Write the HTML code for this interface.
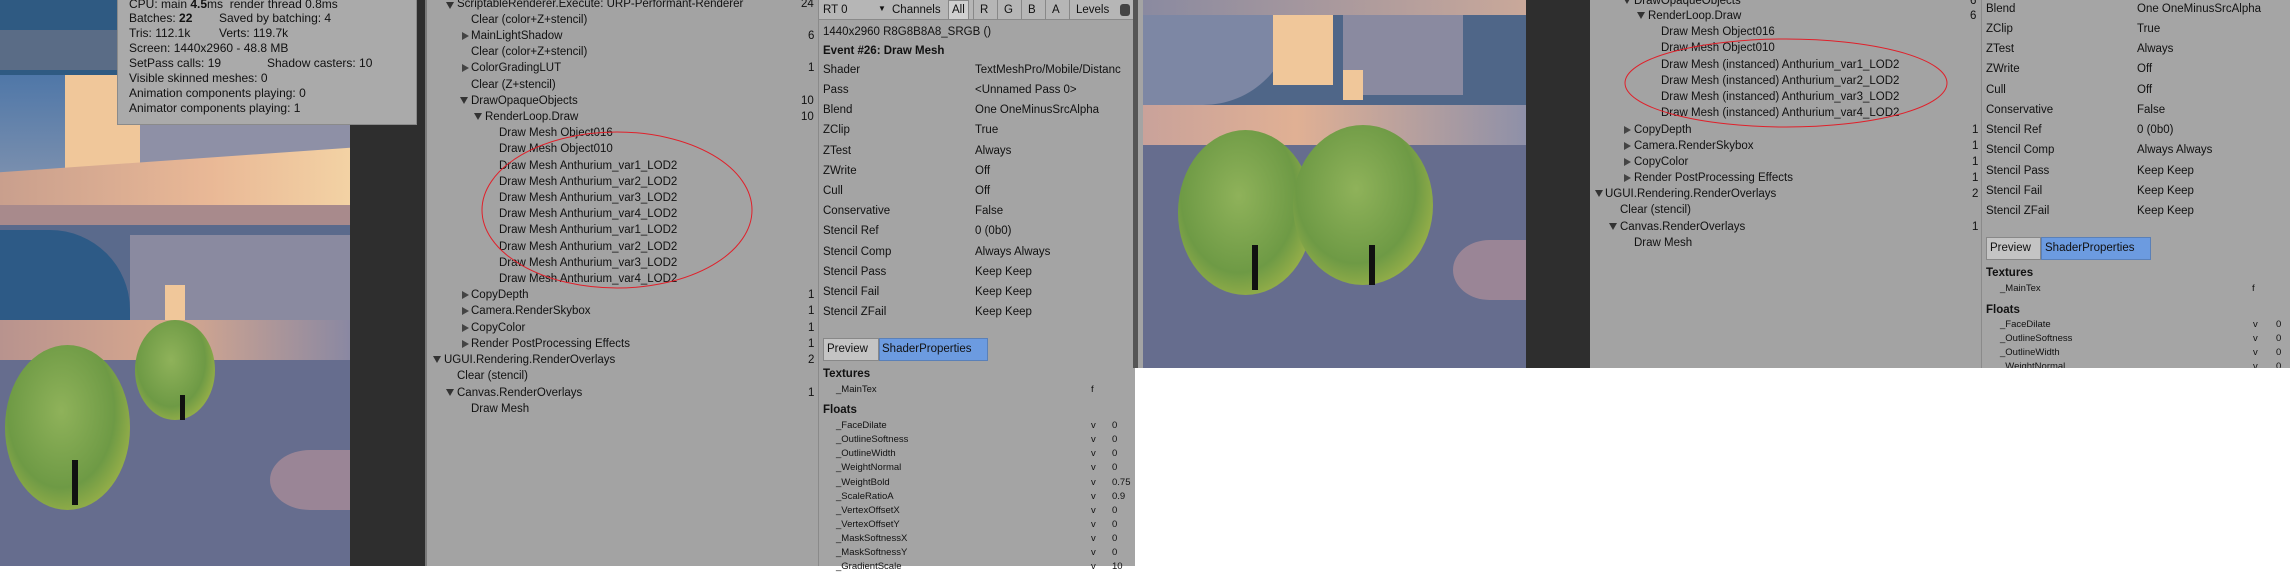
<!DOCTYPE html>
<html><head><meta charset="utf-8"><style>
*{margin:0;padding:0;box-sizing:border-box}
body{width:2290px;height:574px;background:#fff;position:relative;overflow:hidden;font-family:"Liberation Sans",sans-serif;color:#111}
.a{position:absolute}
.t{position:absolute;font-size:11.5px;white-space:nowrap;line-height:14px}
.s{position:absolute;font-size:9.5px;white-space:nowrap;line-height:12px}
.tri{position:absolute;width:0;height:0;border-left:4px solid transparent;border-right:4px solid transparent;border-top:7px solid #333}
.trr{position:absolute;width:0;height:0;border-top:4px solid transparent;border-bottom:4px solid transparent;border-left:7px solid #444}
.b{font-weight:bold}
.plant{position:absolute;border-radius:50%;background:radial-gradient(ellipse at 45% 40%,#8fb25a,#6e9a45 55%,#a8b84a 85%,rgba(150,170,60,0) 100%)}
</style></head><body>

<!-- LEFT COMPOSITE -->
<div class="a" style="left:0;top:0;width:1135px;height:566px;background:#a4a4a4"></div>
<!-- game view left -->
<div class="a" style="left:0;top:0;width:350px;height:566px;overflow:hidden;background:#626a8c">
  <div class="a" style="left:0;top:0;width:350px;height:75px;background:#2f5a82"></div>
  <div class="a" style="left:0;top:30px;width:120px;height:40px;background:#5a6c86"></div>
  <div class="a" style="left:0;top:75px;width:90px;height:100px;background:linear-gradient(#4f77a8,#7a8fae)"></div>
  <div class="a" style="left:65px;top:75px;width:285px;height:100px;background:#f0c79a"></div>
  <div class="a" style="left:140px;top:125px;width:210px;height:50px;background:#8e90a6"></div>
  <div class="a" style="left:0;top:160px;width:350px;height:60px;background:linear-gradient(90deg,#c99f8d,#e9b896 60%,#f3d2a4);transform:skewY(-4deg)"></div>
  <div class="a" style="left:0;top:205px;width:350px;height:20px;background:#a88a8c"></div>
  <div class="a" style="left:0;top:225px;width:350px;height:100px;background:#5a6a8c"></div>
  <div class="a" style="left:0;top:230px;width:130px;height:90px;background:#2d5a86;border-radius:0 80px 0 0"></div>
  <div class="a" style="left:130px;top:235px;width:220px;height:85px;background:#8a8aa0"></div>
  <div class="a" style="left:165px;top:285px;width:20px;height:40px;background:#f0c79a"></div>
  <div class="a" style="left:0;top:320px;width:350px;height:40px;background:linear-gradient(90deg,#b8938e,#d8a88e 50%,#8a88a2)"></div>
  <div class="a" style="left:0;top:360px;width:350px;height:206px;background:#666d8e"></div>
  <div class="a" style="left:270px;top:450px;width:80px;height:60px;background:#9a8596;border-radius:50% 0 0 50%"></div>
  <div class="plant" style="left:5px;top:345px;width:125px;height:165px"></div>
  <div class="plant" style="left:135px;top:320px;width:80px;height:100px"></div>
  <div class="a" style="left:72px;top:460px;width:6px;height:45px;background:#111"></div>
  <div class="a" style="left:180px;top:395px;width:5px;height:25px;background:#111"></div>
</div>
<!-- dark strip -->
<div class="a" style="left:350px;top:0;width:76px;height:566px;background:#2e2e2e"></div>
<div class="a" style="left:425px;top:0;width:2px;height:566px;background:#7a7a7a"></div>
<!-- stats box -->
<div class="a" style="left:117px;top:0;width:300px;height:125px;background:#aaa;border:1px solid #8a8a8a;border-top:none"></div>
<div class="t" style="left:129px;top:-3px;font-size:12px">CPU: main <b>4.5</b>ms&nbsp; render thread 0.8ms</div>
<div class="t" style="left:129px;top:11px;font-size:12px">Batches: <b>22</b></div><div class="t" style="left:219px;top:11px;font-size:12px">Saved by batching: 4</div>
<div class="t" style="left:129px;top:26px;font-size:12px">Tris: 112.1k</div><div class="t" style="left:219px;top:26px;font-size:12px">Verts: 119.7k</div>
<div class="t" style="left:129px;top:41px;font-size:12px">Screen: 1440x2960 - 48.8 MB</div>
<div class="t" style="left:129px;top:56px;font-size:12px">SetPass calls: 19</div><div class="t" style="left:267px;top:56px;font-size:12px">Shadow casters: 10</div>
<div class="t" style="left:129px;top:71px;font-size:12px">Visible skinned meshes: 0</div>
<div class="t" style="left:129px;top:86px;font-size:12px">Animation components playing: 0</div>
<div class="t" style="left:129px;top:101px;font-size:12px">Animator components playing: 1</div>
<!-- hierarchy left -->
<div class="a" style="left:427px;top:0;width:391px;height:566px;background:#a3a3a3"></div>
<div class="tri" style="left:446px;top:2px"></div><div class="t" style="left:457px;top:-3px">ScriptableRenderer.Execute: URP-Performant-Renderer</div><div class="t" style="left:801px;top:-3px">24</div>
<div class="t" style="left:471px;top:13px">Clear (color+Z+stencil)</div>
<div class="trr" style="left:462px;top:32px"></div><div class="t" style="left:471px;top:29px">MainLightShadow</div><div class="t" style="left:808px;top:29px">6</div>
<div class="t" style="left:471px;top:45px">Clear (color+Z+stencil)</div>
<div class="trr" style="left:462px;top:64px"></div><div class="t" style="left:471px;top:61px">ColorGradingLUT</div><div class="t" style="left:808px;top:61px">1</div>
<div class="t" style="left:471px;top:78px">Clear (Z+stencil)</div>
<div class="tri" style="left:460px;top:97px"></div><div class="t" style="left:471px;top:94px">DrawOpaqueObjects</div><div class="t" style="left:801px;top:94px">10</div>
<div class="tri" style="left:474px;top:113px"></div><div class="t" style="left:485px;top:110px">RenderLoop.Draw</div><div class="t" style="left:801px;top:110px">10</div>
<div class="t" style="left:499px;top:126px">Draw Mesh Object016</div>
<div class="t" style="left:499px;top:142px">Draw Mesh Object010</div>
<div class="t" style="left:499px;top:159px">Draw Mesh Anthurium_var1_LOD2</div>
<div class="t" style="left:499px;top:175px">Draw Mesh Anthurium_var2_LOD2</div>
<div class="t" style="left:499px;top:191px">Draw Mesh Anthurium_var3_LOD2</div>
<div class="t" style="left:499px;top:207px">Draw Mesh Anthurium_var4_LOD2</div>
<div class="t" style="left:499px;top:223px">Draw Mesh Anthurium_var1_LOD2</div>
<div class="t" style="left:499px;top:240px">Draw Mesh Anthurium_var2_LOD2</div>
<div class="t" style="left:499px;top:256px">Draw Mesh Anthurium_var3_LOD2</div>
<div class="t" style="left:499px;top:272px">Draw Mesh Anthurium_var4_LOD2</div>
<div class="trr" style="left:462px;top:291px"></div><div class="t" style="left:471px;top:288px">CopyDepth</div><div class="t" style="left:808px;top:288px">1</div>
<div class="trr" style="left:462px;top:307px"></div><div class="t" style="left:471px;top:304px">Camera.RenderSkybox</div><div class="t" style="left:808px;top:304px">1</div>
<div class="trr" style="left:462px;top:324px"></div><div class="t" style="left:471px;top:321px">CopyColor</div><div class="t" style="left:808px;top:321px">1</div>
<div class="trr" style="left:462px;top:340px"></div><div class="t" style="left:471px;top:337px">Render PostProcessing Effects</div><div class="t" style="left:808px;top:337px">1</div>
<div class="tri" style="left:433px;top:356px"></div><div class="t" style="left:444px;top:353px">UGUI.Rendering.RenderOverlays</div><div class="t" style="left:808px;top:353px">2</div>
<div class="t" style="left:457px;top:369px">Clear (stencil)</div>
<div class="tri" style="left:446px;top:389px"></div><div class="t" style="left:457px;top:386px">Canvas.RenderOverlays</div><div class="t" style="left:808px;top:386px">1</div>
<div class="t" style="left:471px;top:402px">Draw Mesh</div>
<svg class="a" style="left:480px;top:128px" width="280" height="170"><ellipse cx="137" cy="82" rx="135" ry="78" fill="none" stroke="#e0202a" stroke-width="1"/></svg>
<!-- right panel left -->
<div class="a" style="left:818px;top:0;width:1px;height:566px;background:#8a8a8a"></div>
<div class="a" style="left:819px;top:0;width:316px;height:20px;background:#b6b6b6;border-bottom:1px solid #8a8a8a"></div>
<div class="t" style="left:823px;top:3px">RT 0</div><div class="t" style="left:878px;top:2px;font-size:8px">▼</div>
<div class="t" style="left:892px;top:3px">Channels</div>
<div class="a" style="left:948px;top:0;width:21px;height:20px;background:#d0d0d0;border:1px solid #888"></div><div class="t" style="left:952px;top:3px">All</div>
<div class="t" style="left:980px;top:3px">R</div><div class="t" style="left:1004px;top:3px">G</div><div class="t" style="left:1028px;top:3px">B</div><div class="t" style="left:1052px;top:3px">A</div>
<div class="a" style="left:973px;top:0;width:1px;height:20px;background:#888"></div><div class="a" style="left:997px;top:0;width:1px;height:20px;background:#888"></div><div class="a" style="left:1021px;top:0;width:1px;height:20px;background:#888"></div><div class="a" style="left:1045px;top:0;width:1px;height:20px;background:#888"></div><div class="a" style="left:1069px;top:0;width:1px;height:20px;background:#888"></div>
<div class="t" style="left:1076px;top:3px">Levels</div><div class="a" style="left:1120px;top:4px;width:10px;height:12px;background:#444;border-radius:3px"></div>
<div class="a" style="left:1133px;top:0;width:2px;height:368px;background:#555"></div>
<div class="t" style="left:823px;top:25px">1440x2960 R8G8B8A8_SRGB ()</div>
<div class="t b" style="left:823px;top:44px">Event #26: Draw Mesh</div>
<div class="t" style="left:823px;top:63px">Shader</div><div class="t" style="left:975px;top:63px">TextMeshPro/Mobile/Distanc</div>
<div class="t" style="left:823px;top:83px">Pass</div><div class="t" style="left:975px;top:83px">&lt;Unnamed Pass 0&gt;</div>
<div class="t" style="left:823px;top:103px">Blend</div><div class="t" style="left:975px;top:103px">One OneMinusSrcAlpha</div>
<div class="t" style="left:823px;top:123px">ZClip</div><div class="t" style="left:975px;top:123px">True</div>
<div class="t" style="left:823px;top:144px">ZTest</div><div class="t" style="left:975px;top:144px">Always</div>
<div class="t" style="left:823px;top:164px">ZWrite</div><div class="t" style="left:975px;top:164px">Off</div>
<div class="t" style="left:823px;top:184px">Cull</div><div class="t" style="left:975px;top:184px">Off</div>
<div class="t" style="left:823px;top:204px">Conservative</div><div class="t" style="left:975px;top:204px">False</div>
<div class="t" style="left:823px;top:224px">Stencil Ref</div><div class="t" style="left:975px;top:224px">0 (0b0)</div>
<div class="t" style="left:823px;top:245px">Stencil Comp</div><div class="t" style="left:975px;top:245px">Always Always</div>
<div class="t" style="left:823px;top:265px">Stencil Pass</div><div class="t" style="left:975px;top:265px">Keep Keep</div>
<div class="t" style="left:823px;top:285px">Stencil Fail</div><div class="t" style="left:975px;top:285px">Keep Keep</div>
<div class="t" style="left:823px;top:305px">Stencil ZFail</div><div class="t" style="left:975px;top:305px">Keep Keep</div>
<div class="a" style="left:823px;top:338px;width:56px;height:23px;background:#c4c4c4;border:1px solid #888"></div><div class="t" style="left:827px;top:342px">Preview</div>
<div class="a" style="left:879px;top:338px;width:109px;height:23px;background:#6c9be0;border:1px solid #5a80b8"></div><div class="t" style="left:882px;top:342px">ShaderProperties</div>
<div class="t b" style="left:823px;top:367px">Textures</div>
<div class="s" style="left:836px;top:384px">_MainTex</div><div class="s" style="left:1091px;top:384px">f</div>
<div class="t b" style="left:823px;top:403px">Floats</div>
<div class="s" style="left:836px;top:420px">_FaceDilate</div><div class="s" style="left:1091px;top:420px">v</div><div class="s" style="left:1112px;top:420px">0</div>
<div class="s" style="left:836px;top:434px">_OutlineSoftness</div><div class="s" style="left:1091px;top:434px">v</div><div class="s" style="left:1112px;top:434px">0</div>
<div class="s" style="left:836px;top:448px">_OutlineWidth</div><div class="s" style="left:1091px;top:448px">v</div><div class="s" style="left:1112px;top:448px">0</div>
<div class="s" style="left:836px;top:462px">_WeightNormal</div><div class="s" style="left:1091px;top:462px">v</div><div class="s" style="left:1112px;top:462px">0</div>
<div class="s" style="left:836px;top:477px">_WeightBold</div><div class="s" style="left:1091px;top:477px">v</div><div class="s" style="left:1112px;top:477px">0.75</div>
<div class="s" style="left:836px;top:491px">_ScaleRatioA</div><div class="s" style="left:1091px;top:491px">v</div><div class="s" style="left:1112px;top:491px">0.9</div>
<div class="s" style="left:836px;top:505px">_VertexOffsetX</div><div class="s" style="left:1091px;top:505px">v</div><div class="s" style="left:1112px;top:505px">0</div>
<div class="s" style="left:836px;top:519px">_VertexOffsetY</div><div class="s" style="left:1091px;top:519px">v</div><div class="s" style="left:1112px;top:519px">0</div>
<div class="s" style="left:836px;top:533px">_MaskSoftnessX</div><div class="s" style="left:1091px;top:533px">v</div><div class="s" style="left:1112px;top:533px">0</div>
<div class="s" style="left:836px;top:547px">_MaskSoftnessY</div><div class="s" style="left:1091px;top:547px">v</div><div class="s" style="left:1112px;top:547px">0</div>
<div class="s" style="left:836px;top:561px">_GradientScale</div><div class="s" style="left:1091px;top:561px">v</div><div class="s" style="left:1112px;top:561px">10</div>

<!-- RIGHT COMPOSITE -->
<div class="a" style="left:1135px;top:0;width:1155px;height:368px;background:#a4a4a4;overflow:hidden">
  <div class="a" style="left:0;top:0;width:3px;height:368px;background:#555"></div>
  <div class="a" style="left:3px;top:0;width:5px;height:368px;background:#a4a4a4"></div>
  <div class="a" style="left:8px;top:0;width:383px;height:368px;overflow:hidden;background:#626a8c">
    <div class="a" style="left:0;top:0;width:383px;height:15px;background:linear-gradient(90deg,#8a8aa0,#c9a89a)"></div>
    <div class="a" style="left:0;top:15px;width:383px;height:95px;background:#4f6688"></div>
    <div class="a" style="left:0;top:15px;width:150px;height:90px;background:#7d87a4;border-radius:0 0 120px 0"></div>
    <div class="a" style="left:130px;top:15px;width:60px;height:70px;background:#f0c79a"></div>
    <div class="a" style="left:200px;top:15px;width:120px;height:80px;background:#8a8aa0"></div>
    <div class="a" style="left:200px;top:70px;width:20px;height:30px;background:#f0c79a"></div>
    <div class="a" style="left:0;top:105px;width:383px;height:40px;background:linear-gradient(90deg,#c9a29a,#e0b094 40%,#8e90a8)"></div>
    <div class="a" style="left:0;top:145px;width:383px;height:223px;background:#666d8e"></div>
    <div class="a" style="left:310px;top:240px;width:73px;height:60px;background:#9a8596;border-radius:50% 0 0 50%"></div>
    <div class="plant" style="left:35px;top:130px;width:135px;height:165px"></div>
    <div class="plant" style="left:150px;top:125px;width:140px;height:160px"></div>
    <div class="a" style="left:109px;top:245px;width:6px;height:45px;background:#111"></div>
    <div class="a" style="left:226px;top:245px;width:6px;height:40px;background:#111"></div>
  </div>
  <div class="a" style="left:391px;top:0;width:64px;height:368px;background:#2e2e2e"></div>
</div>
<div class="a" style="left:1590px;top:0;width:391px;height:368px;background:#a3a3a3"></div>
<div class="tri" style="left:1623px;top:-3px"></div><div class="t" style="left:1634px;top:-6px">DrawOpaqueObjects</div><div class="t" style="left:1970px;top:-6px">6</div>
<div class="tri" style="left:1637px;top:12px"></div><div class="t" style="left:1648px;top:9px">RenderLoop.Draw</div><div class="t" style="left:1970px;top:9px">6</div>
<div class="t" style="left:1661px;top:25px">Draw Mesh Object016</div>
<div class="t" style="left:1661px;top:41px">Draw Mesh Object010</div>
<div class="t" style="left:1661px;top:58px">Draw Mesh (instanced) Anthurium_var1_LOD2</div>
<div class="t" style="left:1661px;top:74px">Draw Mesh (instanced) Anthurium_var2_LOD2</div>
<div class="t" style="left:1661px;top:90px">Draw Mesh (instanced) Anthurium_var3_LOD2</div>
<div class="t" style="left:1661px;top:106px">Draw Mesh (instanced) Anthurium_var4_LOD2</div>
<div class="trr" style="left:1624px;top:126px"></div><div class="t" style="left:1634px;top:123px">CopyDepth</div><div class="t" style="left:1972px;top:123px">1</div>
<div class="trr" style="left:1624px;top:142px"></div><div class="t" style="left:1634px;top:139px">Camera.RenderSkybox</div><div class="t" style="left:1972px;top:139px">1</div>
<div class="trr" style="left:1624px;top:158px"></div><div class="t" style="left:1634px;top:155px">CopyColor</div><div class="t" style="left:1972px;top:155px">1</div>
<div class="trr" style="left:1624px;top:174px"></div><div class="t" style="left:1634px;top:171px">Render PostProcessing Effects</div><div class="t" style="left:1972px;top:171px">1</div>
<div class="tri" style="left:1595px;top:190px"></div><div class="t" style="left:1605px;top:187px">UGUI.Rendering.RenderOverlays</div><div class="t" style="left:1972px;top:187px">2</div>
<div class="t" style="left:1620px;top:203px">Clear (stencil)</div>
<div class="tri" style="left:1609px;top:223px"></div><div class="t" style="left:1620px;top:220px">Canvas.RenderOverlays</div><div class="t" style="left:1972px;top:220px">1</div>
<div class="t" style="left:1634px;top:236px">Draw Mesh</div>
<svg class="a" style="left:1620px;top:36px" width="334" height="96"><ellipse cx="166" cy="47" rx="161" ry="44" fill="none" stroke="#e0202a" stroke-width="1"/></svg>
<div class="a" style="left:1981px;top:0;width:1px;height:368px;background:#8a8a8a"></div>
<div class="a" style="left:1982px;top:0;width:308px;height:368px;background:#a5a5a5"></div>
<div class="t" style="left:1986px;top:2px">Blend</div><div class="t" style="left:2137px;top:2px">One OneMinusSrcAlpha</div>
<div class="t" style="left:1986px;top:22px">ZClip</div><div class="t" style="left:2137px;top:22px">True</div>
<div class="t" style="left:1986px;top:42px">ZTest</div><div class="t" style="left:2137px;top:42px">Always</div>
<div class="t" style="left:1986px;top:62px">ZWrite</div><div class="t" style="left:2137px;top:62px">Off</div>
<div class="t" style="left:1986px;top:83px">Cull</div><div class="t" style="left:2137px;top:83px">Off</div>
<div class="t" style="left:1986px;top:103px">Conservative</div><div class="t" style="left:2137px;top:103px">False</div>
<div class="t" style="left:1986px;top:123px">Stencil Ref</div><div class="t" style="left:2137px;top:123px">0 (0b0)</div>
<div class="t" style="left:1986px;top:143px">Stencil Comp</div><div class="t" style="left:2137px;top:143px">Always Always</div>
<div class="t" style="left:1986px;top:164px">Stencil Pass</div><div class="t" style="left:2137px;top:164px">Keep Keep</div>
<div class="t" style="left:1986px;top:184px">Stencil Fail</div><div class="t" style="left:2137px;top:184px">Keep Keep</div>
<div class="t" style="left:1986px;top:204px">Stencil ZFail</div><div class="t" style="left:2137px;top:204px">Keep Keep</div>
<div class="a" style="left:1986px;top:237px;width:55px;height:23px;background:#c4c4c4;border:1px solid #888"></div><div class="t" style="left:1990px;top:241px">Preview</div>
<div class="a" style="left:2041px;top:237px;width:110px;height:23px;background:#6c9be0;border:1px solid #5a80b8"></div><div class="t" style="left:2045px;top:241px">ShaderProperties</div>
<div class="t b" style="left:1986px;top:266px">Textures</div>
<div class="s" style="left:2000px;top:283px">_MainTex</div><div class="s" style="left:2252px;top:283px">f</div>
<div class="t b" style="left:1986px;top:303px">Floats</div>
<div class="s" style="left:2000px;top:319px">_FaceDilate</div><div class="s" style="left:2253px;top:319px">v</div><div class="s" style="left:2276px;top:319px">0</div>
<div class="s" style="left:2000px;top:333px">_OutlineSoftness</div><div class="s" style="left:2253px;top:333px">v</div><div class="s" style="left:2276px;top:333px">0</div>
<div class="s" style="left:2000px;top:347px">_OutlineWidth</div><div class="s" style="left:2253px;top:347px">v</div><div class="s" style="left:2276px;top:347px">0</div>
<div class="s" style="left:2000px;top:361px">_WeightNormal</div><div class="s" style="left:2253px;top:361px">v</div><div class="s" style="left:2276px;top:361px">0</div>
<div class="a" style="left:1135px;top:368px;width:1155px;height:206px;background:#fff"></div>
</body></html>
